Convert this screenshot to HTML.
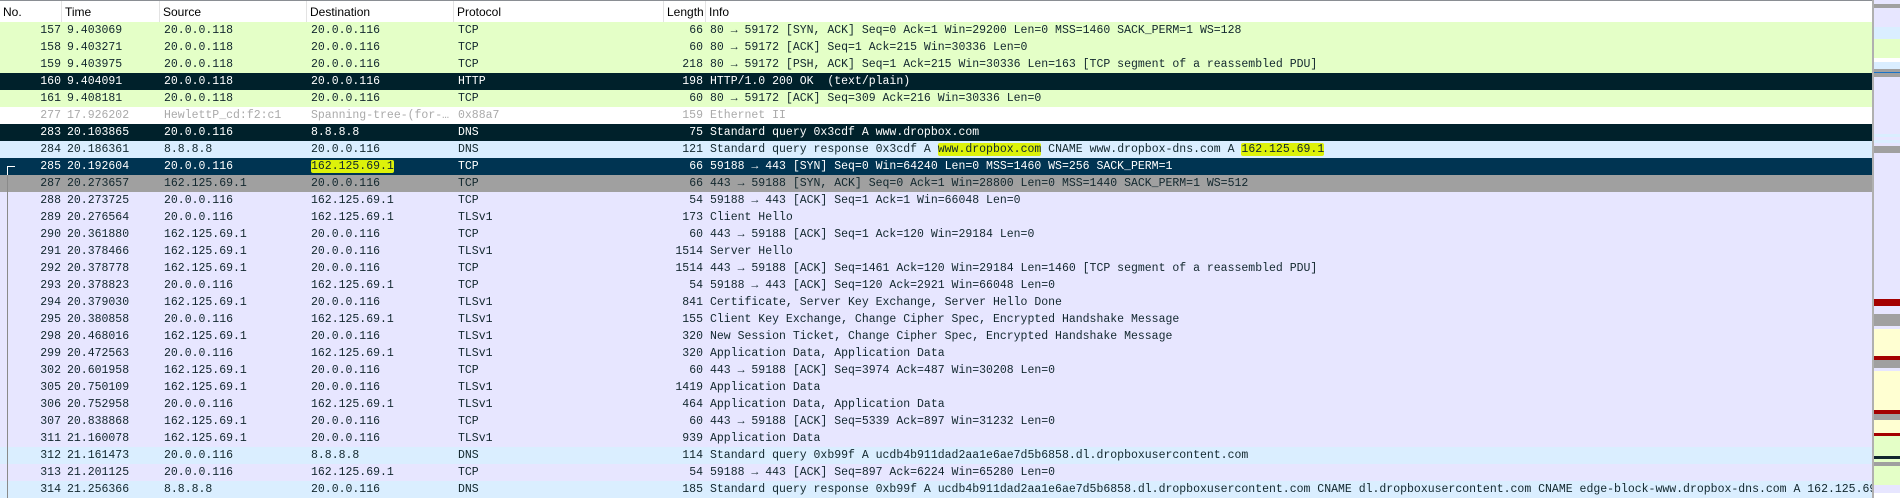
<!DOCTYPE html>
<html><head><meta charset="utf-8">
<style>
*{margin:0;padding:0;box-sizing:border-box}
body{width:1900px;height:498px;overflow:hidden;background:#e7e6ff;position:relative;font-family:"Liberation Mono","DejaVu Sans Mono",monospace;font-size:11.5px;color:#12272e}
#hdr{position:absolute;left:0;top:0;width:1872px;height:22px;background:#fff;border-top:1px solid #8a8e93;font-family:"Liberation Sans",sans-serif;font-size:12px;color:#000}
#hdr span{position:absolute;top:0;line-height:22px;height:21px;padding-left:3px;border-right:1px solid #e3e3e3}
.r{position:absolute;left:0;width:1872px;height:17px;line-height:17px;white-space:pre;overflow:hidden}
.r span{position:absolute;top:0;overflow:hidden;white-space:pre}
.n{left:0;width:61px;text-align:right}
.t{left:67px}
.s{left:164px;width:142px}
.d{left:311px;width:142px}
.p{left:458px}
.l{left:600px;width:103px;text-align:right}
.i{left:710px;width:1162px}
.g{background:#e4ffc7}.k{background:#00212b;color:#fff}.w{background:#fff;color:#aaa}
.b{background:#daeeff}.v{background:#e7e6ff}.sel{background:#003452;color:#fff}.gr{background:#a0a0a0}
.hl{background:#ddf20a;color:#12272e;border-radius:2px;font-weight:normal}
#mm{position:absolute;left:1872px;top:0;width:28px;height:498px;border-left:2px solid #b0b0b0;background:#e7e6ff}
#mm div{position:absolute;left:0;width:26px}
</style></head><body>
<div id="hdr">
<span style="left:0;width:62px">No.</span>
<span style="left:62px;width:98px">Time</span>
<span style="left:160px;width:147px">Source</span>
<span style="left:307px;width:147px">Destination</span>
<span style="left:454px;width:210px">Protocol</span>
<span style="left:664px;width:42px">Length</span>
<span style="left:706px;width:1166px;border:none">Info</span>
</div>

<div class="r g" style="top:22px"><span class="n">157</span><span class="t">9.403069</span><span class="s">20.0.0.118</span><span class="d">20.0.0.116</span><span class="p">TCP</span><span class="l">66</span><span class="i">80 → 59172 [SYN, ACK] Seq=0 Ack=1 Win=29200 Len=0 MSS=1460 SACK_PERM=1 WS=128</span></div>
<div class="r g" style="top:39px"><span class="n">158</span><span class="t">9.403271</span><span class="s">20.0.0.118</span><span class="d">20.0.0.116</span><span class="p">TCP</span><span class="l">60</span><span class="i">80 → 59172 [ACK] Seq=1 Ack=215 Win=30336 Len=0</span></div>
<div class="r g" style="top:56px"><span class="n">159</span><span class="t">9.403975</span><span class="s">20.0.0.118</span><span class="d">20.0.0.116</span><span class="p">TCP</span><span class="l">218</span><span class="i">80 → 59172 [PSH, ACK] Seq=1 Ack=215 Win=30336 Len=163 [TCP segment of a reassembled PDU]</span></div>
<div class="r k" style="top:73px"><span class="n">160</span><span class="t">9.404091</span><span class="s">20.0.0.118</span><span class="d">20.0.0.116</span><span class="p">HTTP</span><span class="l">198</span><span class="i">HTTP/1.0 200 OK  (text/plain)</span></div>
<div class="r g" style="top:90px"><span class="n">161</span><span class="t">9.408181</span><span class="s">20.0.0.118</span><span class="d">20.0.0.116</span><span class="p">TCP</span><span class="l">60</span><span class="i">80 → 59172 [ACK] Seq=309 Ack=216 Win=30336 Len=0</span></div>
<div class="r w" style="top:107px"><span class="n">277</span><span class="t">17.926202</span><span class="s">HewlettP_cd:f2:c1</span><span class="d">Spanning-tree-(for-…</span><span class="p">0x88a7</span><span class="l">159</span><span class="i">Ethernet II</span></div>
<div class="r k" style="top:124px"><span class="n">283</span><span class="t">20.103865</span><span class="s">20.0.0.116</span><span class="d">8.8.8.8</span><span class="p">DNS</span><span class="l">75</span><span class="i">Standard query 0x3cdf A www.dropbox.com</span></div>
<div class="r b" style="top:141px"><span class="n">284</span><span class="t">20.186361</span><span class="s">8.8.8.8</span><span class="d">20.0.0.116</span><span class="p">DNS</span><span class="l">121</span><span class="i">Standard query response 0x3cdf A <b class="hl">www.dropbox.com</b> CNAME www.dropbox-dns.com A <b class="hl">162.125.69.1</b></span></div>
<div class="r sel" style="top:158px"><span class="n">285</span><span class="t">20.192604</span><span class="s">20.0.0.116</span><span class="d"><b class="hl">162.125.69.1</b></span><span class="p">TCP</span><span class="l">66</span><span class="i">59188 → 443 [SYN] Seq=0 Win=64240 Len=0 MSS=1460 WS=256 SACK_PERM=1</span></div>
<div class="r gr" style="top:175px"><span class="n">287</span><span class="t">20.273657</span><span class="s">162.125.69.1</span><span class="d">20.0.0.116</span><span class="p">TCP</span><span class="l">66</span><span class="i">443 → 59188 [SYN, ACK] Seq=0 Ack=1 Win=28800 Len=0 MSS=1440 SACK_PERM=1 WS=512</span></div>
<div class="r v" style="top:192px"><span class="n">288</span><span class="t">20.273725</span><span class="s">20.0.0.116</span><span class="d">162.125.69.1</span><span class="p">TCP</span><span class="l">54</span><span class="i">59188 → 443 [ACK] Seq=1 Ack=1 Win=66048 Len=0</span></div>
<div class="r v" style="top:209px"><span class="n">289</span><span class="t">20.276564</span><span class="s">20.0.0.116</span><span class="d">162.125.69.1</span><span class="p">TLSv1</span><span class="l">173</span><span class="i">Client Hello</span></div>
<div class="r v" style="top:226px"><span class="n">290</span><span class="t">20.361880</span><span class="s">162.125.69.1</span><span class="d">20.0.0.116</span><span class="p">TCP</span><span class="l">60</span><span class="i">443 → 59188 [ACK] Seq=1 Ack=120 Win=29184 Len=0</span></div>
<div class="r v" style="top:243px"><span class="n">291</span><span class="t">20.378466</span><span class="s">162.125.69.1</span><span class="d">20.0.0.116</span><span class="p">TLSv1</span><span class="l">1514</span><span class="i">Server Hello</span></div>
<div class="r v" style="top:260px"><span class="n">292</span><span class="t">20.378778</span><span class="s">162.125.69.1</span><span class="d">20.0.0.116</span><span class="p">TCP</span><span class="l">1514</span><span class="i">443 → 59188 [ACK] Seq=1461 Ack=120 Win=29184 Len=1460 [TCP segment of a reassembled PDU]</span></div>
<div class="r v" style="top:277px"><span class="n">293</span><span class="t">20.378823</span><span class="s">20.0.0.116</span><span class="d">162.125.69.1</span><span class="p">TCP</span><span class="l">54</span><span class="i">59188 → 443 [ACK] Seq=120 Ack=2921 Win=66048 Len=0</span></div>
<div class="r v" style="top:294px"><span class="n">294</span><span class="t">20.379030</span><span class="s">162.125.69.1</span><span class="d">20.0.0.116</span><span class="p">TLSv1</span><span class="l">841</span><span class="i">Certificate, Server Key Exchange, Server Hello Done</span></div>
<div class="r v" style="top:311px"><span class="n">295</span><span class="t">20.380858</span><span class="s">20.0.0.116</span><span class="d">162.125.69.1</span><span class="p">TLSv1</span><span class="l">155</span><span class="i">Client Key Exchange, Change Cipher Spec, Encrypted Handshake Message</span></div>
<div class="r v" style="top:328px"><span class="n">298</span><span class="t">20.468016</span><span class="s">162.125.69.1</span><span class="d">20.0.0.116</span><span class="p">TLSv1</span><span class="l">320</span><span class="i">New Session Ticket, Change Cipher Spec, Encrypted Handshake Message</span></div>
<div class="r v" style="top:345px"><span class="n">299</span><span class="t">20.472563</span><span class="s">20.0.0.116</span><span class="d">162.125.69.1</span><span class="p">TLSv1</span><span class="l">320</span><span class="i">Application Data, Application Data</span></div>
<div class="r v" style="top:362px"><span class="n">302</span><span class="t">20.601958</span><span class="s">162.125.69.1</span><span class="d">20.0.0.116</span><span class="p">TCP</span><span class="l">60</span><span class="i">443 → 59188 [ACK] Seq=3974 Ack=487 Win=30208 Len=0</span></div>
<div class="r v" style="top:379px"><span class="n">305</span><span class="t">20.750109</span><span class="s">162.125.69.1</span><span class="d">20.0.0.116</span><span class="p">TLSv1</span><span class="l">1419</span><span class="i">Application Data</span></div>
<div class="r v" style="top:396px"><span class="n">306</span><span class="t">20.752958</span><span class="s">20.0.0.116</span><span class="d">162.125.69.1</span><span class="p">TLSv1</span><span class="l">464</span><span class="i">Application Data, Application Data</span></div>
<div class="r v" style="top:413px"><span class="n">307</span><span class="t">20.838868</span><span class="s">162.125.69.1</span><span class="d">20.0.0.116</span><span class="p">TCP</span><span class="l">60</span><span class="i">443 → 59188 [ACK] Seq=5339 Ack=897 Win=31232 Len=0</span></div>
<div class="r v" style="top:430px"><span class="n">311</span><span class="t">21.160078</span><span class="s">162.125.69.1</span><span class="d">20.0.0.116</span><span class="p">TLSv1</span><span class="l">939</span><span class="i">Application Data</span></div>
<div class="r b" style="top:447px"><span class="n">312</span><span class="t">21.161473</span><span class="s">20.0.0.116</span><span class="d">8.8.8.8</span><span class="p">DNS</span><span class="l">114</span><span class="i">Standard query 0xb99f A ucdb4b911dad2aa1e6ae7d5b6858.dl.dropboxusercontent.com</span></div>
<div class="r v" style="top:464px"><span class="n">313</span><span class="t">21.201125</span><span class="s">20.0.0.116</span><span class="d">162.125.69.1</span><span class="p">TCP</span><span class="l">54</span><span class="i">59188 → 443 [ACK] Seq=897 Ack=6224 Win=65280 Len=0</span></div>
<div class="r b" style="top:481px"><span class="n">314</span><span class="t">21.256366</span><span class="s">8.8.8.8</span><span class="d">20.0.0.116</span><span class="p">DNS</span><span class="l">185</span><span class="i">Standard query response 0xb99f A ucdb4b911dad2aa1e6ae7d5b6858.dl.dropboxusercontent.com CNAME dl.dropboxusercontent.com CNAME edge-block-www.dropbox-dns.com A 162.125.69.1</span></div>

<div style="position:absolute;left:7px;top:166px;width:8px;height:1px;background:#fff"></div>
<div style="position:absolute;left:7px;top:166px;width:1px;height:9px;background:#fff"></div>
<div style="position:absolute;left:7px;top:175px;width:1px;height:323px;background:#8a8a8a"></div>

<div id="mm">
<div style="top:4px;height:4px;background:#a0a0a0"></div>
<div style="top:27px;height:12px;background:#daeeff"></div>
<div style="top:39px;height:19px;background:#e4ffc7"></div>
<div style="top:58px;height:4px;background:#fff"></div>
<div style="top:62px;height:7px;background:#daeeff"></div>
<div style="top:69px;height:3px;background:#a0a0a0"></div>
<div style="top:72px;height:1px;background:#1a73c8"></div>
<div style="top:73px;height:4px;background:#a0a0a0"></div>
<div style="top:134px;height:3px;background:#daeeff"></div>
<div style="top:140px;height:3px;background:#daeeff"></div>
<div style="top:146px;height:7px;background:#a0a0a0"></div>
<div style="top:299px;height:7px;background:#a40000"></div>
<div style="top:314px;height:12px;background:#a0a0a0"></div>
<div style="top:329px;height:27px;background:#ffffd2"></div>
<div style="top:356px;height:4px;background:#a40000"></div>
<div style="top:360px;height:8px;background:#a0a0a0"></div>
<div style="top:371px;height:39px;background:#ffffd2"></div>
<div style="top:410px;height:4px;background:#a40000"></div>
<div style="top:414px;height:6px;background:#a0a0a0"></div>
<div style="top:420px;height:13px;background:#ffffd2"></div>
<div style="top:433px;height:3px;background:#a40000"></div>
<div style="top:436px;height:21px;background:#e4ffc7"></div>
<div style="top:456px;height:3px;background:#12272e"></div>
<div style="top:459px;height:3px;background:#e4ffc7"></div>
<div style="top:462px;height:4px;background:#a0a0a0"></div>
<div style="top:466px;height:19px;background:#e4ffc7"></div>
<div style="top:493px;height:5px;background:#fff"></div>
</div>
</body></html>
